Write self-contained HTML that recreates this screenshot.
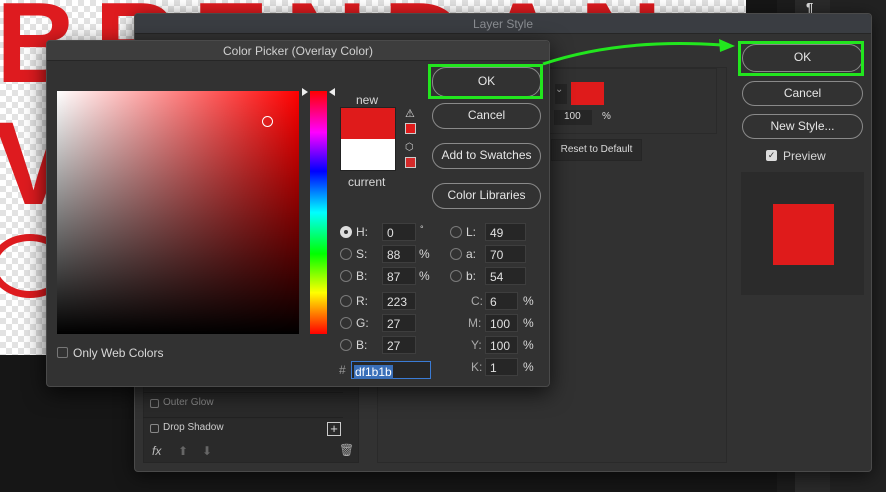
<!DOCTYPE html>
<html><head><meta charset="utf-8"><style>
*{box-sizing:border-box;margin:0;padding:0}
body{width:886px;height:492px;overflow:hidden;background:#161616;position:relative;font-family:"Liberation Sans",sans-serif;}
.a{position:absolute}
.chk{background-color:#fff;background-image:conic-gradient(#e2e2e2 25%,#fff 0 50%,#e2e2e2 0 75%,#fff 0);background-size:12px 12px;}
.btn{position:absolute;border:1.5px solid #8a8a8a;border-radius:14px;color:#e6e6e6;font-size:12px;text-align:center;background:#323232}
.lbl{position:absolute;color:#d8d8d8;font-size:12px}
.inp{position:absolute;background:#262626;border:1px solid #3e3e3e;color:#e0e0e0;font-size:12px;padding:2px 0 0 4px;height:18px}
.rad{position:absolute;width:12px;height:12px;border:1px solid #7a7a7a;border-radius:50%}
.g{position:absolute;border:3px solid #22e61e}
</style></head><body>
<div class="a chk" style="left:0;top:0;width:746px;height:355px;overflow:hidden">
  <div class="a" style="left:-4px;top:-22px;font:bold 114px 'Liberation Sans',sans-serif;color:#de1b1f;letter-spacing:16px;white-space:nowrap">BRENDAN</div>
  <div class="a" style="left:-6px;top:96px;font:bold 118px 'Liberation Sans',sans-serif;color:#de1b1f;">V</div>
  <div class="a" style="left:-10px;top:234px;width:80px;height:64px;border:7px solid #de1b1f;border-radius:50%"></div>
</div>
<div class="a" style="left:777px;top:0;width:18px;height:492px;background:#1c1c1c"></div>
<div class="a" style="left:795px;top:0;width:35px;height:492px;background:#2a2a2a"></div>
<div class="a" style="left:830px;top:0;width:56px;height:492px;background:#222"></div>
<div class="a" style="left:806px;top:0;color:#ddd;font-size:13px;font-weight:bold">¶</div>

<div class="a" style="left:134px;top:13px;width:738px;height:459px;background:#323232;border:1px solid #4a4a4a;border-radius:4px;box-shadow:0 4px 18px rgba(0,0,0,.6)">
  <div class="a" style="left:0;top:0;width:736px;height:20px;background:#3a3d42;border-bottom:1px solid #262626;border-radius:4px 4px 0 0;color:#8a8d92;font-size:12px;text-align:center;line-height:20px">Layer Style</div>
  <div class="a" style="left:8px;top:60px;width:216px;height:389px;background:#2a2a2a;border:1px solid #262626"></div>
  <div class="a" style="left:242px;top:53px;width:350px;height:396px;border:1px solid #2a2a2a;background:#313131"></div>
  <div class="a" style="left:414px;top:54px;width:168px;height:66px;border:1px solid #2a2a2a"></div>
  <div class="a" style="left:420px;top:70px;width:12px;height:20px;background:#262626;color:#aaa;font-size:10px">⌄</div>
  <div class="a" style="left:436px;top:68px;width:33px;height:23px;background:#df1b1b"></div>
  <div class="a" style="left:419px;top:96px;width:38px;height:15px;background:#262626;color:#ddd;font-size:10px;padding:1px 0 0 10px">100</div>
  <div class="lbl" style="left:467px;top:97px;font-size:10px">%</div>
  <div class="a" style="left:416px;top:125px;width:91px;height:22px;background:#2a2a2a;border:1px solid #262626;color:#ddd;font-size:10px;text-align:center;line-height:20px">Reset to Default</div>
  <div class="btn" style="left:607px;top:30px;width:121px;height:28px;line-height:25px">OK</div>
  <div class="btn" style="left:607px;top:67px;width:121px;height:25px;line-height:22px">Cancel</div>
  <div class="btn" style="left:607px;top:100px;width:121px;height:25px;line-height:22px">New Style...</div>
  <div class="a" style="left:631px;top:136px;width:11px;height:11px;background:#ddd;border-radius:2px;color:#333;font-size:9px;line-height:11px;text-align:center">✓</div>
  <div class="lbl" style="left:648px;top:135px;font-size:12px">Preview</div>
  <div class="a" style="left:606px;top:158px;width:123px;height:123px;background:#2b2b2b"></div>
  <div class="a" style="left:638px;top:190px;width:61px;height:61px;background:#df1b1b"></div>
  <div class="a" style="left:8px;top:378px;width:200px;height:1px;background:#222"></div>
  <div class="a" style="left:8px;top:403px;width:200px;height:1px;background:#222"></div>
  <div class="a" style="left:15px;top:385px;width:9px;height:9px;border:1px solid #777;border-radius:2px"></div>
  <div class="lbl" style="left:28px;top:383px;font-size:10px;color:#888">Outer Glow</div>
  <div class="a" style="left:15px;top:410px;width:9px;height:9px;border:1px solid #888;border-radius:2px"></div>
  <div class="lbl" style="left:28px;top:408px;font-size:10px;color:#ccc">Drop Shadow</div>
  <div class="a" style="left:192px;top:408px;width:14px;height:14px;border:1px solid #ccc;color:#ddd;font-size:13px;line-height:11px;text-align:center">+</div>
  <div class="lbl" style="left:17px;top:430px;font-style:italic;font-size:12px;color:#bbb">fx</div>
  <div class="lbl" style="left:43px;top:430px;color:#666">⬆</div>
  <div class="lbl" style="left:67px;top:430px;color:#666">⬇</div>
  <div class="lbl" style="left:204px;top:429px;color:#aaa;font-size:12px">🗑</div>
</div>

<div class="a" style="left:46px;top:40px;width:504px;height:347px;background:#323232;border:1px solid #4a4a4a;border-radius:4px;box-shadow:0 6px 22px rgba(0,0,0,.7)">
  <div class="a" style="left:0;top:0;width:502px;height:20px;background:#3d3d3d;border-bottom:1px solid #262626;border-radius:4px 4px 0 0;color:#d0d0d0;font-size:12px;text-align:center;line-height:20px">Color Picker (Overlay Color)</div>
  <div class="a" style="left:10px;top:50px;width:242px;height:243px;background:linear-gradient(to bottom,rgba(0,0,0,0),#000),linear-gradient(to right,#fff,#f00)"></div>
  <div class="a" style="left:215px;top:75px;width:11px;height:11px;border:1.5px solid #fff;border-radius:50%"></div>
  <div class="a" style="left:263px;top:50px;width:17px;height:243px;background:linear-gradient(to bottom,#f00,#f0f 17%,#00f 33%,#0ff 50%,#0f0 67%,#ff0 83%,#f00)"></div>
  <div class="a" style="left:255px;top:47px;width:0;height:0;border-top:4px solid transparent;border-bottom:4px solid transparent;border-left:6px solid #eee"></div>
  <div class="a" style="left:282px;top:47px;width:0;height:0;border-top:4px solid transparent;border-bottom:4px solid transparent;border-right:6px solid #eee"></div>
  <div class="lbl" style="left:309px;top:52px">new</div>
  <div class="a" style="left:293px;top:66px;width:56px;height:64px;border:1px solid #222;background:linear-gradient(#df1b1b 50%,#fff 50%)"></div>
  <div class="lbl" style="left:301px;top:134px">current</div>
  <div class="a" style="left:358px;top:66px;color:#ddd;font-size:11px">⚠</div>
  <div class="a" style="left:358px;top:82px;width:11px;height:11px;background:#df1b1b;border:1px solid #ccc"></div>
  <div class="a" style="left:358px;top:101px;color:#ccc;font-size:10px">⬡</div>
  <div class="a" style="left:358px;top:116px;width:11px;height:11px;background:#d42a2a;border:1px solid #ccc"></div>
  <div class="btn" style="left:385px;top:26px;width:109px;height:30px;line-height:27px">OK</div>
  <div class="btn" style="left:385px;top:62px;width:109px;height:26px;line-height:23px">Cancel</div>
  <div class="btn" style="left:385px;top:102px;width:109px;height:26px;line-height:23px">Add to Swatches</div>
  <div class="btn" style="left:385px;top:142px;width:109px;height:26px;line-height:23px">Color Libraries</div>

  <div class="rad" style="left:293px;top:185px;border:4px solid #ddd;background:#333"></div>
  <div class="lbl" style="left:309px;top:184px">H:</div><div class="inp" style="left:335px;top:182px;width:34px">0</div><div class="lbl" style="left:373px;top:183px;font-size:9px">°</div>
  <div class="rad" style="left:293px;top:207px"></div><div class="lbl" style="left:309px;top:206px">S:</div><div class="inp" style="left:335px;top:204px;width:34px">88</div><div class="lbl" style="left:372px;top:206px">%</div>
  <div class="rad" style="left:293px;top:229px"></div><div class="lbl" style="left:309px;top:228px">B:</div><div class="inp" style="left:335px;top:226px;width:34px">87</div><div class="lbl" style="left:372px;top:228px">%</div>
  <div class="rad" style="left:293px;top:254px"></div><div class="lbl" style="left:309px;top:253px">R:</div><div class="inp" style="left:335px;top:251px;width:34px">223</div>
  <div class="rad" style="left:293px;top:276px"></div><div class="lbl" style="left:309px;top:275px">G:</div><div class="inp" style="left:335px;top:273px;width:34px">27</div>
  <div class="rad" style="left:293px;top:298px"></div><div class="lbl" style="left:309px;top:297px">B:</div><div class="inp" style="left:335px;top:295px;width:34px">27</div>
  <div class="lbl" style="left:292px;top:322px;color:#999">#</div>
  <div class="a" style="left:304px;top:320px;width:80px;height:18px;border:1px solid #3a7bd5;background:#262626;padding:1px 0 0 2px"><span style="background:#3a6fb8;color:#fff;font-size:12px;padding:0 1px">df1b1b</span></div>

  <div class="rad" style="left:403px;top:185px"></div><div class="lbl" style="left:419px;top:184px">L:</div><div class="inp" style="left:438px;top:182px;width:41px">49</div>
  <div class="rad" style="left:403px;top:207px"></div><div class="lbl" style="left:419px;top:206px">a:</div><div class="inp" style="left:438px;top:204px;width:41px">70</div>
  <div class="rad" style="left:403px;top:229px"></div><div class="lbl" style="left:419px;top:228px">b:</div><div class="inp" style="left:438px;top:226px;width:41px">54</div>
  <div class="lbl" style="left:424px;top:253px;color:#aaa">C:</div><div class="inp" style="left:438px;top:251px;width:33px">6</div><div class="lbl" style="left:476px;top:253px">%</div>
  <div class="lbl" style="left:421px;top:275px;color:#aaa">M:</div><div class="inp" style="left:438px;top:273px;width:33px">100</div><div class="lbl" style="left:476px;top:275px">%</div>
  <div class="lbl" style="left:424px;top:297px;color:#aaa">Y:</div><div class="inp" style="left:438px;top:295px;width:33px">100</div><div class="lbl" style="left:476px;top:297px">%</div>
  <div class="lbl" style="left:424px;top:319px;color:#aaa">K:</div><div class="inp" style="left:438px;top:317px;width:33px">1</div><div class="lbl" style="left:476px;top:319px">%</div>

  <div class="a" style="left:10px;top:306px;width:11px;height:11px;border:1px solid #777;border-radius:2px"></div>
  <div class="lbl" style="left:26px;top:305px;font-size:12px">Only Web Colors</div>
</div>

<div class="g" style="left:428px;top:64px;width:115px;height:35px"></div>
<div class="g" style="left:738px;top:41px;width:126px;height:35px"></div>
<svg class="a" style="left:0;top:0" width="886" height="492"><path d="M543 64 Q620 38 722 45" stroke="#22e61e" stroke-width="3" fill="none"/><polygon points="735,46 719,39 720,52" fill="#22e61e"/></svg>
</body></html>
